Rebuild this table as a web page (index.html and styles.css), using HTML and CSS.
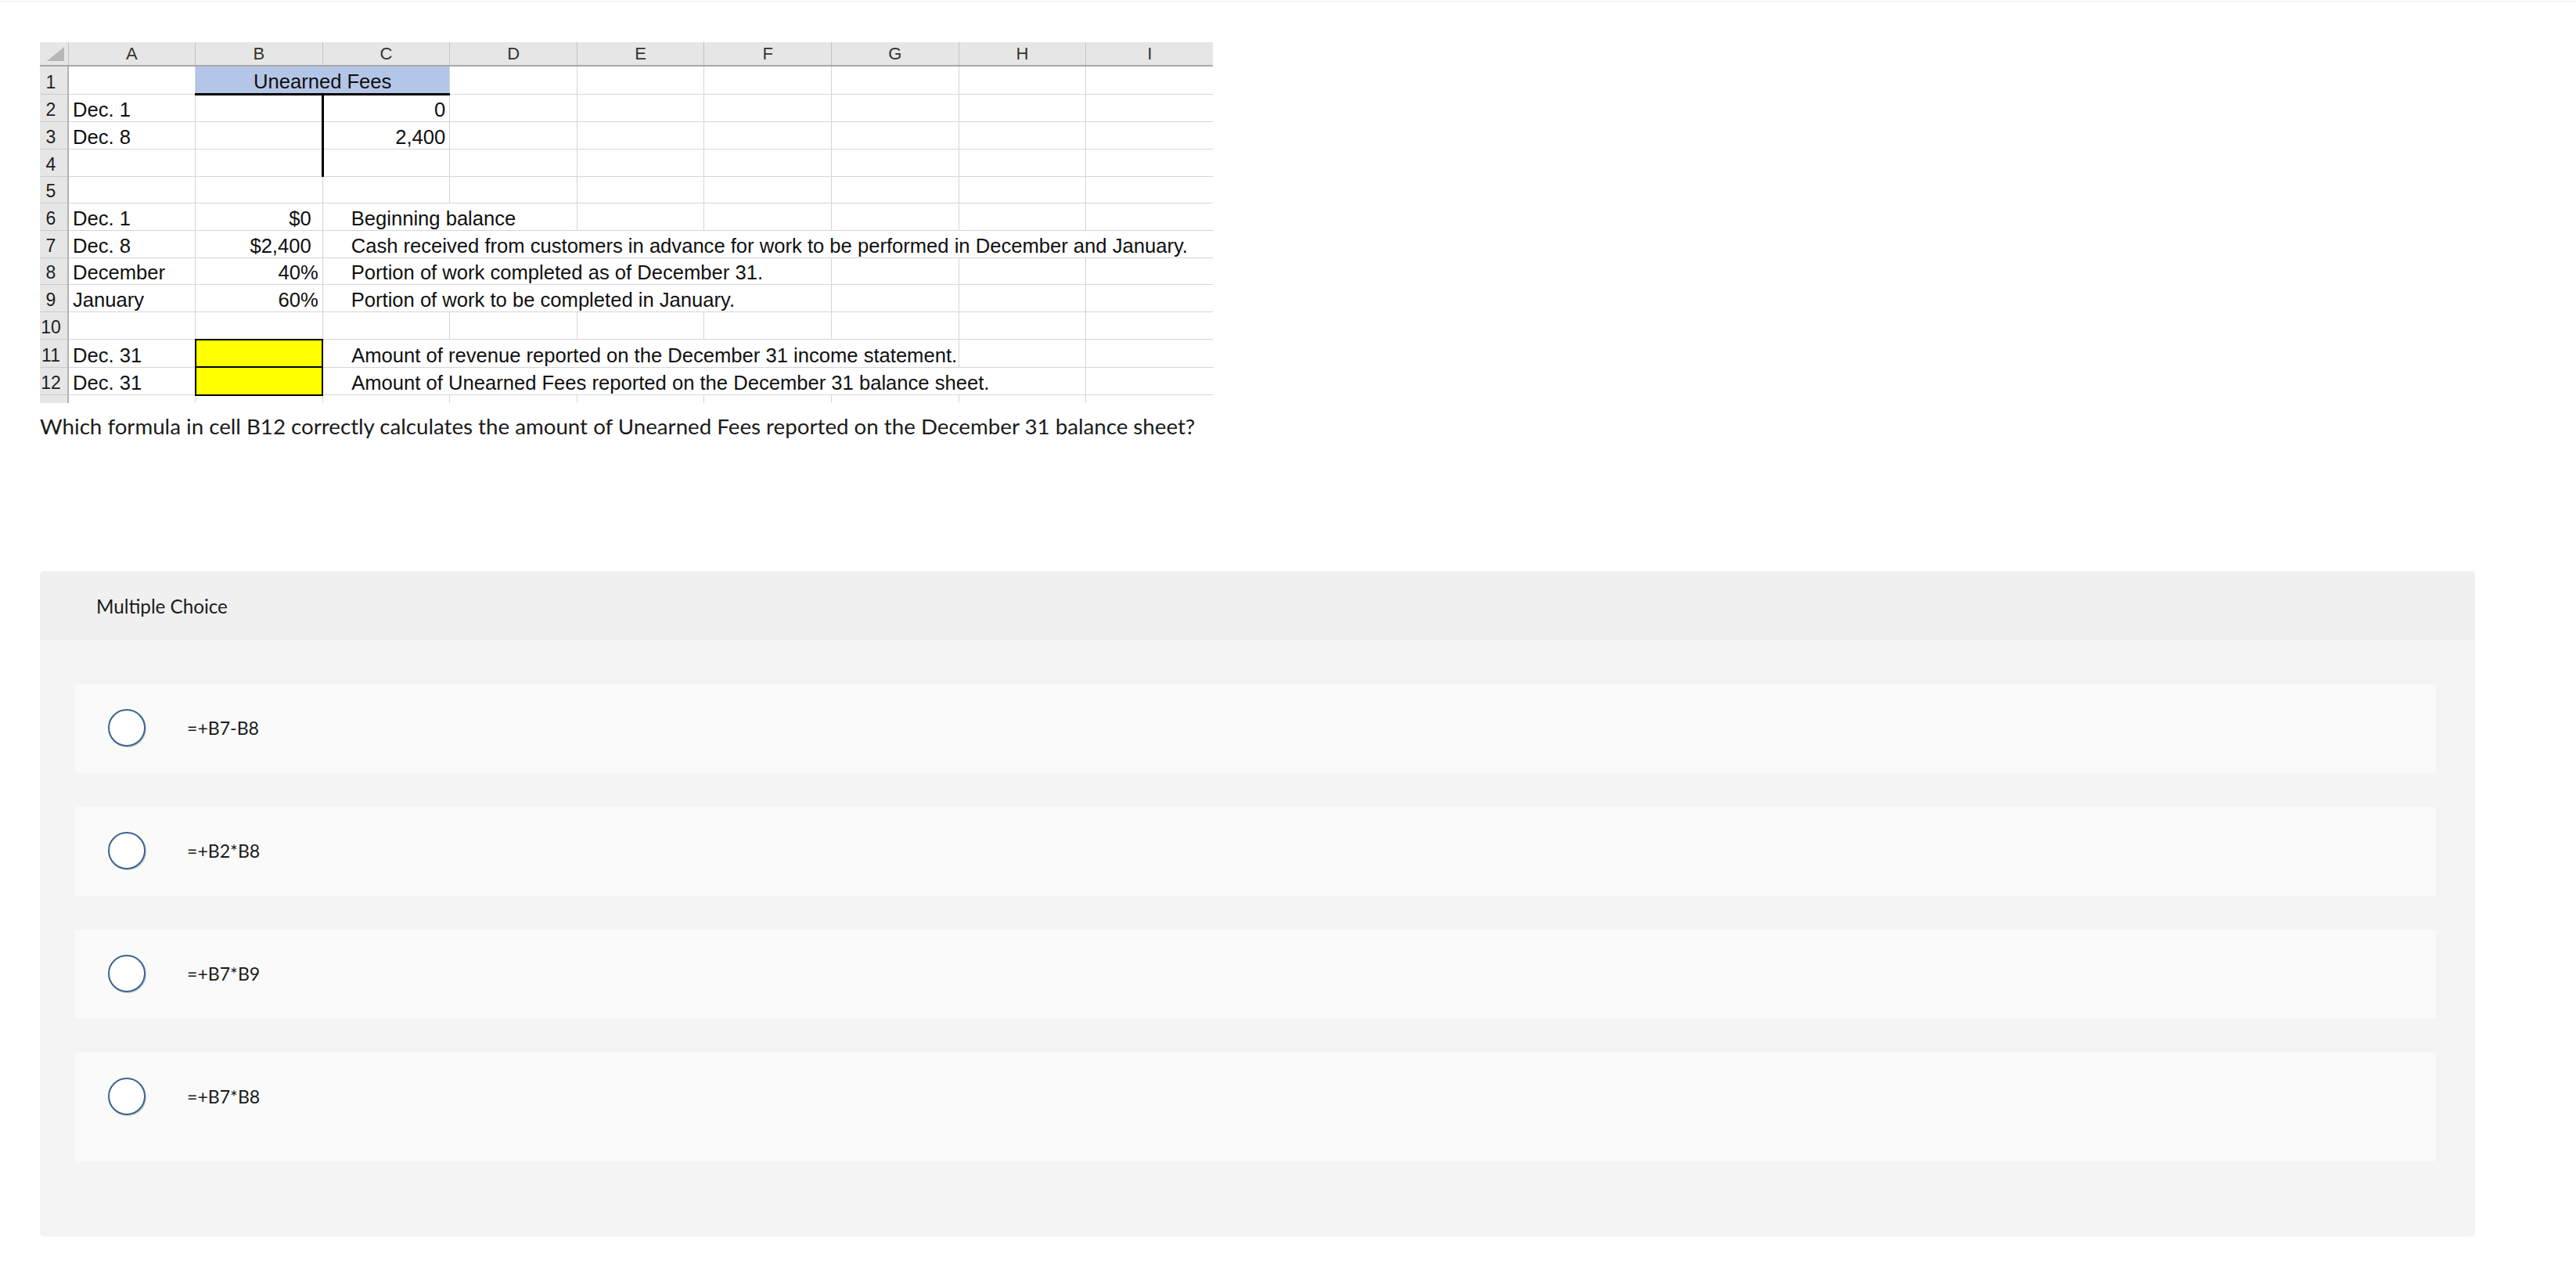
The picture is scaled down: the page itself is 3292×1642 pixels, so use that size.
FILE: index.html
```html
<!DOCTYPE html>
<html>

<head>
	<meta charset="utf-8">
	<meta name="viewport" content="width=device-width, initial-scale=1">
	<title>Unearned Fees - Multiple Choice</title>
	<link rel="stylesheet" href="styles.css">
</head>

<body>
	<div class="top-rule"></div>

	<div class="content">
		<table class="sheet">
			<colgroup>
				<col class="col-rownum">
				<col class="col-cell">
				<col class="col-cell">
				<col class="col-cell">
				<col class="col-cell">
				<col class="col-cell">
				<col class="col-cell">
				<col class="col-cell">
				<col class="col-cell">
				<col class="col-cell">
			</colgroup>
			<tr class="head-row">
				<th class="corner"><div class="corner-tri"></div></th>
				<th>A</th><th>B</th><th>C</th><th>D</th><th>E</th><th>F</th><th>G</th><th>H</th><th>I</th>
			</tr>
			<tr>
				<th class="rownum">1</th>
				<td></td>
				<td colspan="2" class="title">Unearned Fees</td>
				<td></td><td></td><td></td><td></td><td></td><td></td>
			</tr>
			<tr>
				<th class="rownum">2</th>
				<td>Dec. 1</td>
				<td class="t-left"></td>
				<td class="num">0</td>
				<td></td><td></td><td></td><td></td><td></td><td></td>
			</tr>
			<tr>
				<th class="rownum">3</th>
				<td>Dec. 8</td>
				<td class="t-left"></td>
				<td class="num">2,400</td>
				<td></td><td></td><td></td><td></td><td></td><td></td>
			</tr>
			<tr>
				<th class="rownum">4</th>
				<td></td>
				<td class="t-left"></td>
				<td></td>
				<td></td><td></td><td></td><td></td><td></td><td></td>
			</tr>
			<tr>
				<th class="rownum">5</th>
				<td></td><td></td><td></td><td></td><td></td><td></td><td></td><td></td><td></td>
			</tr>
			<tr>
				<th class="rownum">6</th>
				<td>Dec. 1</td>
				<td class="acct">$0</td>
				<td colspan="2" class="note">Beginning balance</td>
				<td></td><td></td><td></td><td></td><td></td>
			</tr>
			<tr>
				<th class="rownum">7</th>
				<td>Dec. 8</td>
				<td class="acct">$2,400</td>
				<td colspan="7" class="note">Cash received from customers in advance for work to be performed in December and January.</td>
			</tr>
			<tr>
				<th class="rownum">8</th>
				<td>December</td>
				<td class="pct">40%</td>
				<td colspan="4" class="note">Portion of work completed as of December 31.</td>
				<td></td><td></td><td></td>
			</tr>
			<tr>
				<th class="rownum">9</th>
				<td>January</td>
				<td class="pct">60%</td>
				<td colspan="4" class="note">Portion of work to be completed in January.</td>
				<td></td><td></td><td></td>
			</tr>
			<tr>
				<th class="rownum">10</th>
				<td></td><td></td><td></td><td></td><td></td><td></td><td></td><td></td><td></td>
			</tr>
			<tr>
				<th class="rownum">11</th>
				<td>Dec. 31</td>
				<td class="due"></td>
				<td colspan="5" class="note">Amount of revenue reported on the December 31 income statement.</td>
				<td></td><td></td>
			</tr>
			<tr>
				<th class="rownum">12</th>
				<td>Dec. 31</td>
				<td class="due"></td>
				<td colspan="6" class="note">Amount of Unearned Fees reported on the December 31 balance sheet.</td>
				<td></td>
			</tr>
			<tr class="cut-row">
				<th class="rownum"></th>
				<td></td><td></td><td></td><td></td><td></td><td></td><td></td><td></td><td></td>
			</tr>
		</table>

		<p class="question">Which formula in cell B12 correctly calculates the amount of Unearned Fees reported on the December 31 balance sheet?</p>

		<div class="mc-panel">
			<div class="mc-header">Multiple Choice</div>
			<div class="mc-choices">
				<label class="choice">
					<span class="radio"></span>
					<span class="choice-text">=+B7-B8</span>
				</label>
				<label class="choice">
					<span class="radio"></span>
					<span class="choice-text">=+B2*B8</span>
				</label>
				<label class="choice">
					<span class="radio"></span>
					<span class="choice-text">=+B7*B9</span>
				</label>
				<label class="choice choice-last">
					<span class="radio"></span>
					<span class="choice-text">=+B7*B8</span>
				</label>
			</div>
		</div>
	</div>
</body>

</html>
```

FILE: styles.css
```css
body {
	margin: 0;
	background-color: #FFFFFF;
	color: #1a1a1a;
	font-family: "Lato", "Liberation Sans", sans-serif;
}

.top-rule {
	height: 1px;
	margin-top: 1px;
	background-color: #ececec;
}

.content {
	width: 3112px;
	margin-left: 51px;
}

/* Spreadsheet screenshot */
.sheet {
	margin-top: 52px;
	width: 1499px;
	table-layout: fixed;
	border-collapse: collapse;
	font-family: "Liberation Sans", Arial, sans-serif;
	font-size: 25.6px;
	color: #101010;
}

.col-rownum {
	width: 36px;
}

.col-cell {
	width: 162.6px;
}

.sheet td {
	height: 33.67px;
	padding: 0 5px;
	line-height: 30px;
	vertical-align: bottom;
	white-space: nowrap;
	overflow: hidden;
	border: 1px solid #d6d6d6;
}

.head-row th {
	height: 29px;
	padding: 0;
	font-size: 22px;
	font-weight: normal;
	line-height: 29px;
	color: #333333;
	text-align: center;
	background-color: #e6e6e6;
	border-top-style: hidden;
	border-right: 1px solid #c4c4c4;
	border-bottom: 2px solid #a8a8a8;
}

.corner-tri {
	width: 0;
	height: 0;
	margin: 6px 5px 5px auto;
	border-left: 22px solid transparent;
	border-bottom: 18px solid #b6b6b6;
}

.rownum {
	padding: 0 7px 0 0;
	font-size: 23px;
	font-weight: normal;
	line-height: 30px;
	vertical-align: bottom;
	color: #1e1e1e;
	text-align: center;
	background-color: #e6e6e6;
	border-left-style: hidden;
	border-right: 2px solid #b3b3b3;
	border-bottom: 1px solid #cbcbcb;
}

.sheet tr > :last-child {
	border-right-style: hidden;
}

.cut-row td,
.cut-row th {
	height: 9px;
	border-bottom-style: hidden;
}

.title {
	text-align: center;
	background-color: #b4c6e7;
	border-bottom: 3px solid #000000 !important;
}

.t-left {
	border-right: 3px solid #000000 !important;
}

.num {
	text-align: right;
}

.acct {
	padding-right: 14px !important;
	text-align: right;
}

.pct {
	text-align: right;
}

.note {
	padding-left: 36px !important;
}

.due {
	background-color: #ffff00;
	border: 2px solid #000000 !important;
}

/* Question */
.question {
	margin: 13px 0 0;
	font-size: 27.7px;
	line-height: 1.2;
	color: #1b1b1b;
}

.mc-panel {
	margin-top: 169px;
	padding-bottom: 96px;
	background-color: #f4f4f4;
	border-radius: 5px;
}

.mc-header {
	display: flex;
	align-items: center;
	height: 88px;
	padding-left: 72px;
	font-size: 24.2px;
	background-color: #f0f0f0;
	border-radius: 5px 5px 0 0;
}

.mc-choices {
	display: flex;
	flex-direction: column;
	gap: 43px;
	padding: 56px 50px 0 45px;
}

.choice {
	display: flex;
	align-items: center;
	padding: 32px 0 34px 42px;
	background-color: #fafafa;
	border-radius: 4px;
}

.choice-last {
	align-items: flex-start;
	padding-bottom: 59px;
}

.radio {
	box-sizing: border-box;
	width: 48px;
	height: 48px;
	flex-shrink: 0;
	background-color: #FFFFFF;
	border: 2px solid #3a6591;
	border-radius: 50%;
	box-shadow: 1px 1px 1px rgba(0, 0, 0, 0.2);
}

.choice-text {
	margin-left: 53px;
	font-size: 23.1px;
	color: #1a1a1a;
}

.choice-last .choice-text {
	line-height: 48px;
}
```
